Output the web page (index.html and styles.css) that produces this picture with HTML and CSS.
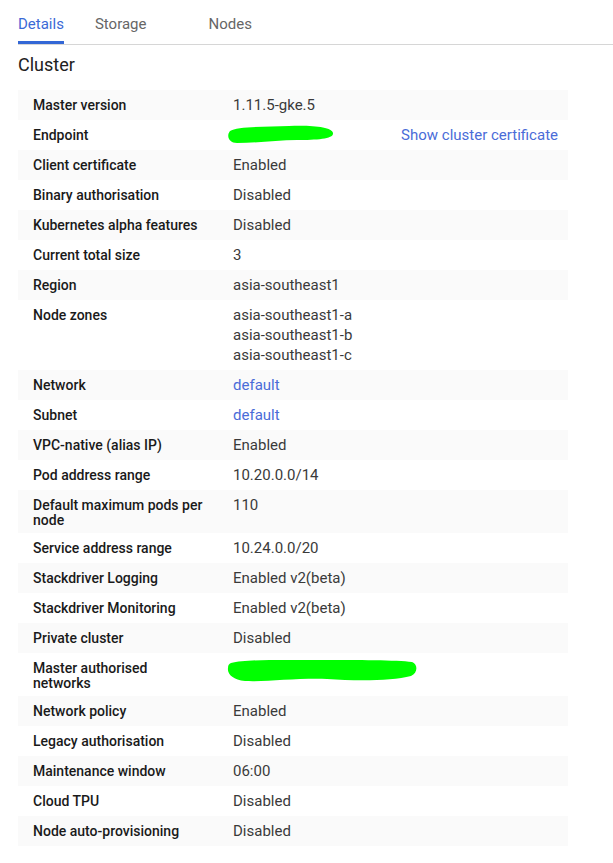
FILE: index.html
```html
<!DOCTYPE html>
<html>
<head>
<meta charset="utf-8">
<link rel="stylesheet" href="styles.css">
</head>
<body>
<div class="tabs">
  <div class="tab active">Details</div>
  <div class="tab storage">Storage</div>
  <div class="tab nodes">Nodes</div>
</div>
<h2 class="heading">Cluster</h2>
<div class="table">
  <div class="row"><div class="label">Master version</div><div class="value">1.11.5-gke.5</div></div>
  <div class="row"><div class="label">Endpoint</div><div class="value split">
    <svg class="blob1" width="110" height="20" viewBox="0 0 110 20"><path d="M3,6 C10,1 40,2 62,1 C85,0 105,2 106,8 C107,14 90,15 70,15 C50,15 30,18 10,18 C2,18 -1,11 3,6 Z" fill="#00ff00"/></svg>
    <a class="link">Show cluster certificate</a></div></div>
  <div class="row"><div class="label">Client certificate</div><div class="value">Enabled</div></div>
  <div class="row"><div class="label">Binary authorisation</div><div class="value">Disabled</div></div>
  <div class="row"><div class="label">Kubernetes alpha features</div><div class="value">Disabled</div></div>
  <div class="row"><div class="label">Current total size</div><div class="value">3</div></div>
  <div class="row"><div class="label">Region</div><div class="value">asia-southeast1</div></div>
  <div class="row"><div class="label">Node zones</div><div class="value">asia-southeast1-a<br>asia-southeast1-b<br>asia-southeast1-c</div></div>
  <div class="row"><div class="label">Network</div><div class="value"><a class="link">default</a></div></div>
  <div class="row"><div class="label">Subnet</div><div class="value"><a class="link">default</a></div></div>
  <div class="row"><div class="label">VPC-native (alias IP)</div><div class="value">Enabled</div></div>
  <div class="row"><div class="label">Pod address range</div><div class="value">10.20.0.0/14</div></div>
  <div class="row"><div class="label">Default maximum pods per node</div><div class="value">110</div></div>
  <div class="row"><div class="label">Service address range</div><div class="value">10.24.0.0/20</div></div>
  <div class="row"><div class="label">Stackdriver Logging</div><div class="value">Enabled v2(beta)</div></div>
  <div class="row"><div class="label">Stackdriver Monitoring</div><div class="value">Enabled v2(beta)</div></div>
  <div class="row"><div class="label">Private cluster</div><div class="value">Disabled</div></div>
  <div class="row"><div class="label">Master authorised networks</div><div class="value">
    <svg class="blob2" width="192" height="26" viewBox="0 0 192 26"><path d="M4,6 C20,2 60,3 95,3 C130,3 170,3 185,5 C191,7 191,16 184,19 C165,24 130,24 100,22 C70,21 40,25 18,24 C6,23 0,17 1,11 C1,8 2,7 4,6 Z" fill="#00ff00"/></svg>
  </div></div>
  <div class="row"><div class="label">Network policy</div><div class="value">Enabled</div></div>
  <div class="row"><div class="label">Legacy authorisation</div><div class="value">Disabled</div></div>
  <div class="row"><div class="label">Maintenance window</div><div class="value">06:00</div></div>
  <div class="row"><div class="label">Cloud TPU</div><div class="value">Disabled</div></div>
  <div class="row"><div class="label">Node auto-provisioning</div><div class="value">Disabled</div></div>
</div>
</body>
</html>
```
FILE: styles.css
```css
html, body {
  margin: 0;
  padding: 0;
  background: #fff;
  font-family: Roboto, "Liberation Sans", sans-serif;
  font-size: 14px;
}
.tabs {
  display: flex;
  margin-left: 18px;
  border-bottom: 1px solid #d6d6d6;
}
.tab {
  padding-top: 14px;
  line-height: 20px;
  padding-bottom: 7px;
  border-bottom: 3px solid transparent;
  color: #666;
  font-size: 15px;
}
.tab.active {
  color: #3b6ad6;
  border-bottom-color: #3367d6;
}
.tab.storage {
  margin-left: 31px;
}
.tab.nodes {
  margin-left: 62px;
}
.heading {
  margin: 8px 0 13px 18px;
  font-size: 18px;
  line-height: 24px;
  font-weight: 400;
  color: #212121;
}
.table {
  width: 550px;
  margin-left: 18px;
}
.row {
  display: grid;
  grid-template-columns: 175px 1fr;
  column-gap: 25px;
  padding: 0 10px 0 15px;
  align-items: start;
}
.row:nth-child(odd) {
  background: #fafafa;
}
.label {
  font-weight: 500;
  color: #1a1a1a;
  line-height: 15px;
  padding: 8px 0 5px;
}
.value {
  color: #3a3a3a;
  font-size: 15px;
  line-height: 20px;
  padding: 5px 0;
}
.split {
  display: flex;
  justify-content: space-between;
  align-items: center;
}
.link {
  color: #4a6cd8;
  text-decoration: none;
}
.blob1 {
  display: block;
  margin-left: -6px;
}
.blob2 {
  display: block;
  margin: -1px 0 -5px -6px;
}
```
